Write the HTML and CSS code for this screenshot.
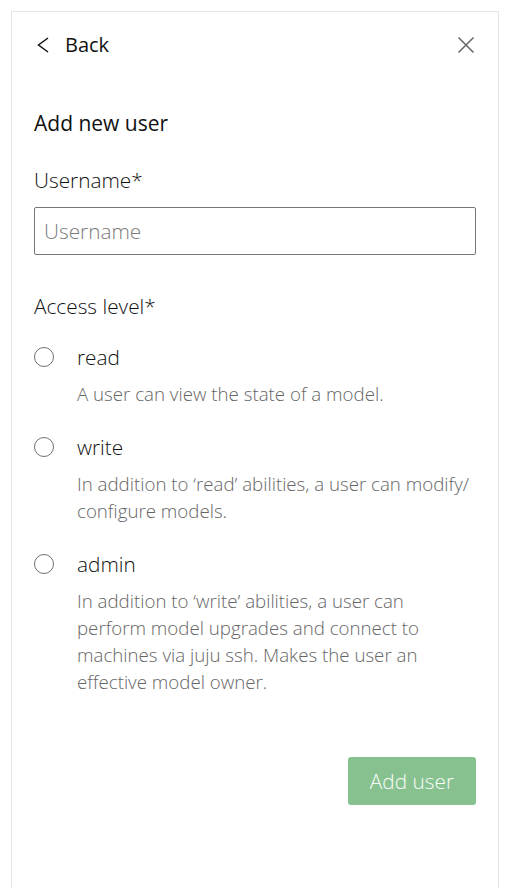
FILE: index.html
```html
<!DOCTYPE html>
<html lang="en">
<head>
<meta charset="utf-8">
<title>Add new user</title>
<link rel="stylesheet" href="styles.css">
</head>
<body>
<div class="panel">
  <header class="panel-header">
    <button class="back-btn" type="button">
      <svg class="chevron" width="20" height="20" viewBox="0 0 20 20" aria-hidden="true"><polyline points="14,3 4.5,10 14,17" fill="none" stroke="#111" stroke-width="1.5" stroke-linejoin="miter"/></svg>
      <span>Back</span>
    </button>
    <button class="close-btn" type="button" aria-label="Close">
      <svg width="20" height="20" viewBox="0 0 20 20" aria-hidden="true"><path d="M2.5 2.5 L17.5 17.5 M17.5 2.5 L2.5 17.5" fill="none" stroke="#666" stroke-width="1.5"/></svg>
    </button>
  </header>

  <h4 class="title">Add new user</h4>

  <form class="form">
    <label class="field-label" for="username">Username*</label>
    <input class="text-input" id="username" type="text" placeholder="Username">

    <div class="field-label access-label">Access level*</div>

    <label class="radio">
      <input class="radio-input" type="radio" name="access" value="read">
      <span class="radio-text">read</span>
    </label>
    <p class="help">A user can view the state of a model.</p>

    <label class="radio">
      <input class="radio-input" type="radio" name="access" value="write">
      <span class="radio-text">write</span>
    </label>
    <p class="help">In addition to ‘read’ abilities, a user can modify/<br>configure models.</p>

    <label class="radio">
      <input class="radio-input" type="radio" name="access" value="admin">
      <span class="radio-text">admin</span>
    </label>
    <p class="help">In addition to ‘write’ abilities, a user can<br>perform model upgrades and connect to<br>machines via juju ssh. Makes the user an<br>effective model owner.</p>

    <div class="actions">
      <button class="btn-positive" type="submit" disabled>Add user</button>
    </div>
  </form>
</div>
</body>
</html>
```

FILE: styles.css
```css
* {
  box-sizing: border-box;
}

html, body {
  margin: 0;
  padding: 0;
  background: #fff;
}

body {
  font-family: "Open Sans", "Noto Sans", sans-serif;
  color: #111;
}

.panel {
  width: 488px;
  min-height: 877px;
  margin: 11px 0 0 11px;
  padding: 21px 22px 0;
  border: 1px solid #e5e5e5;
  border-bottom: 0;
}

.panel-header {
  display: flex;
  justify-content: space-between;
  align-items: center;
  height: 24px;
}

.back-btn {
  display: flex;
  align-items: center;
  gap: 11px;
  padding: 0;
  border: 0;
  background: none;
  font-family: inherit;
  font-size: 20px;
  line-height: 24px;
  font-weight: 400;
  color: #111;
}

.chevron {
  display: block;
}

.close-btn {
  display: flex;
  padding: 0;
  border: 0;
  background: none;
}

.close-btn svg {
  display: block;
}

.title {
  margin: 51px 0 0;
  font-size: 21px;
  line-height: 30px;
  font-weight: 400;
  color: #111;
}

.form {
  margin: 0;
}

.field-label {
  display: block;
  margin-top: 27px;
  font-size: 20.8px;
  line-height: 30px;
  font-weight: 300;
  color: #111;
}

.access-label {
  margin-top: 36px;
}

.text-input {
  display: block;
  width: 100%;
  height: 48px;
  margin: 12px 0 0;
  padding: 0 9px;
  border: 1px solid #767676;
  border-radius: 2px;
  background: #fff;
  font-family: inherit;
  font-size: 20.8px;
  font-weight: 300;
  color: #111;
}

.text-input::placeholder {
  color: #7a7a7a;
  opacity: 1;
}

.radio {
  display: flex;
  align-items: center;
  gap: 23px;
  height: 30px;
  margin-top: 25px;
}

.access-label + .radio {
  margin-top: 21px;
}

.radio-input {
  appearance: none;
  -webkit-appearance: none;
  flex: none;
  width: 20px;
  height: 20px;
  margin: 0;
  border: 1px solid #6f6f6f;
  border-radius: 50%;
  background: #fff;
}

.radio-text {
  font-size: 20.8px;
  line-height: 30px;
  font-weight: 300;
  color: #111;
}

.help {
  margin: 8px 0 0 43px;
  font-size: 18.7px;
  line-height: 27px;
  font-weight: 300;
  color: #666;
}

.actions {
  display: flex;
  justify-content: flex-end;
  margin-top: 62px;
}

.btn-positive {
  height: 48px;
  padding: 0 22px;
  border: 0;
  border-radius: 3px;
  background: #86c18f;
  font-family: inherit;
  font-size: 20.8px;
  font-weight: 300;
  color: #fafdfa;
}
```
